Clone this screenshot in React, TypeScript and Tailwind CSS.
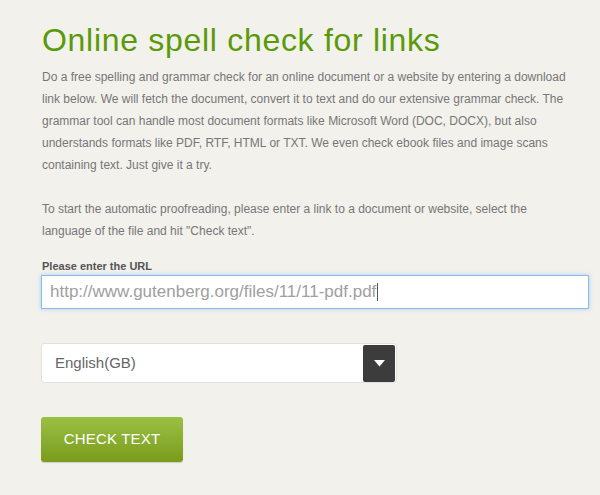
import React from "react";

export default function App() {
  return (
    <div className="w-[600px] h-[495px] overflow-hidden bg-[#f2f1ec] font-['Liberation_Sans',Arial,sans-serif]">
      <div className="pl-[41px] pr-[11px] pt-[22px]">
        <h1 className="text-[32px] leading-[36px] tracking-[0.7px] text-[#5a9a0a] ml-[1px]">Online spell check for links</h1>
        <p className="mt-[8px] w-[532px] text-[12px] leading-[22px] text-[#777] ml-[1px]">
          Do a free spelling and grammar check for an online document or a website by entering a download link below. We will fetch the document, convert it to text and do our extensive grammar check. The grammar tool can handle most document formats like Microsoft Word (DOC, DOCX), but also understands formats like PDF, RTF, HTML or TXT. We even check ebook files and image scans containing text. Just give it a try.
        </p>
        <p className="mt-[22px] w-[532px] text-[12px] leading-[22px] text-[#777] ml-[1px]">
          To start the automatic proofreading, please enter a link to a document or website, select the language of the file and hit "Check text".
        </p>
        <div className="mt-[18px] text-[11px] leading-[13px] font-bold text-[#555] ml-[1px]">Please enter the URL</div>
        <div className="mt-[2px] w-[548px] h-[34px] bg-white border border-[#86bdee] shadow-[0_0_4px_rgba(120,180,240,0.6)] flex items-center pl-[8px]">
          <span className="text-[17px] text-[#a0a0a0]">http://www.gutenberg.org/files/11/11-pdf.pdf</span>
          <span className="w-px h-[18px] bg-[#555] ml-[1px]"></span>
        </div>
        <div className="mt-[34px] w-[356px] h-[40px] bg-white border border-[#e0e0dc] rounded-[3px] flex items-center justify-between">
          <span className="pl-[13px] text-[15px] text-[#666]">English(GB)</span>
          <div className="w-[32px] h-[37px] mr-[1px] bg-[#3c3c3c] rounded-[2px] flex items-center justify-center">
            <svg width="11" height="7" viewBox="0 0 11 7"><polygon points="0,0 11,0 5.5,6.5" fill="#fff" /></svg>
          </div>
        </div>
        <button className="mt-[34px] w-[142px] h-[45px] rounded-[3px] bg-gradient-to-b from-[#9ac043] to-[#7a9c1a] text-white text-[15px] tracking-[0.2px] shadow-[0_1px_1px_rgba(0,0,0,0.15)]">
          CHECK TEXT
        </button>
      </div>
    </div>
  );
}
